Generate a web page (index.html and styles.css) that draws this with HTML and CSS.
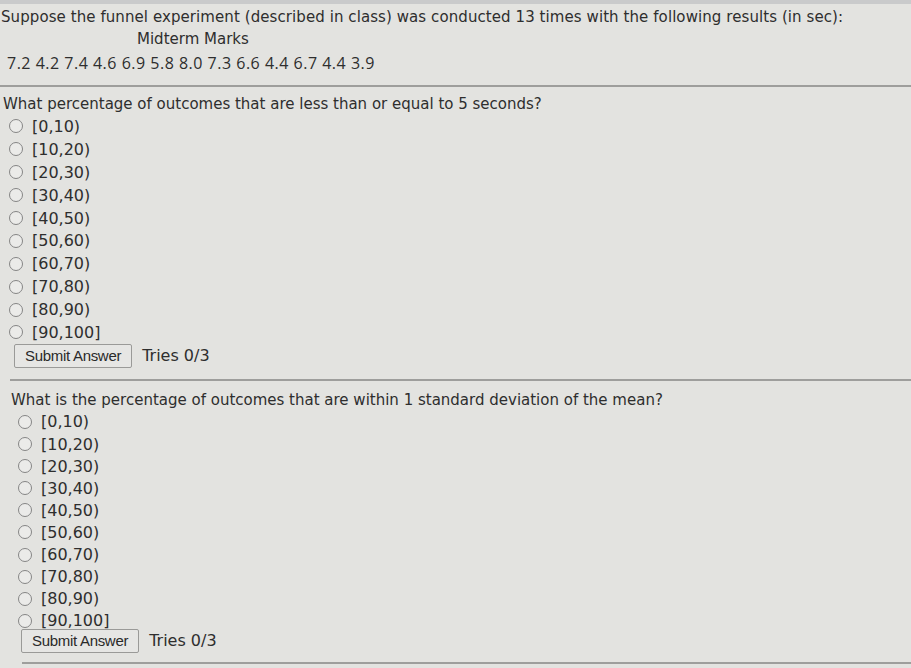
FILE: index.html
```html
<!DOCTYPE html>
<html>
<head>
<meta charset="utf-8">
<link rel="stylesheet" href="styles.css">
</head>
<body>
<div class="topbar"></div>
<div class="intro">
  <p class="lead">Suppose the funnel experiment (described in class) was conducted 13 times with the following results (in sec):</p>
  <div class="table-title">Midterm Marks</div>
  <div class="data">7.2 4.2 7.4 4.6 6.9 5.8 8.0 7.3 6.6 4.4 6.7 4.4 3.9</div>
</div>
<hr class="rule">
<section class="q q1">
  <p class="question">What percentage of outcomes that are less than or equal to 5 seconds?</p>
  <ul class="options">
    <li><span class="radio"></span>[0,10)</li>
    <li><span class="radio"></span>[10,20)</li>
    <li><span class="radio"></span>[20,30)</li>
    <li><span class="radio"></span>[30,40)</li>
    <li><span class="radio"></span>[40,50)</li>
    <li><span class="radio"></span>[50,60)</li>
    <li><span class="radio"></span>[60,70)</li>
    <li><span class="radio"></span>[70,80)</li>
    <li><span class="radio"></span>[80,90)</li>
    <li><span class="radio"></span>[90,100]</li>
  </ul>
  <div class="submit-row"><button class="submit">Submit Answer</button><span class="tries">Tries 0/3</span></div>
</section>
<hr class="rule rule2">
<section class="q q2">
  <p class="question">What is the percentage of outcomes that are within 1 standard deviation of the mean?</p>
  <ul class="options">
    <li><span class="radio"></span>[0,10)</li>
    <li><span class="radio"></span>[10,20)</li>
    <li><span class="radio"></span>[20,30)</li>
    <li><span class="radio"></span>[30,40)</li>
    <li><span class="radio"></span>[40,50)</li>
    <li><span class="radio"></span>[50,60)</li>
    <li><span class="radio"></span>[60,70)</li>
    <li><span class="radio"></span>[70,80)</li>
    <li><span class="radio"></span>[80,90)</li>
    <li><span class="radio"></span>[90,100]</li>
  </ul>
  <div class="submit-row"><button class="submit">Submit Answer</button><span class="tries">Tries 0/3</span></div>
</section>
<hr class="rule rule3">
</body>
</html>
```
FILE: styles.css
```css
html, body {
  margin: 0;
  padding: 0;
}
body {
  background: #e3e3e0;
  color: #2e2e2e;
  font-family: "DejaVu Sans", Verdana, sans-serif;
  font-size: 15px;
  overflow: hidden;
  height: 668px;
}
.topbar {
  height: 4px;
  background: #c9cacb;
}
.intro {
  padding: 0 0 0 1px;
}
.lead {
  margin: 3px 0 0 0;
  line-height: 20px;
  letter-spacing: 0.08px;
}
.table-title {
  margin-left: 136px;
  line-height: 20px;
  margin-top: 2px;
}
.data {
  font-family: "Open Sans", sans-serif;
  font-size: 16px;
  letter-spacing: 0.5px;
  line-height: 20px;
  margin: 4px 0 0 6px;
}
.rule {
  border: 0;
  height: 2px;
  background: #9e9e9c;
  margin: 12px 0 0 0;
}
.q1 {
  padding-left: 3px;
}
.question {
  margin: 7px 0 1px 0;
  line-height: 20px;
}
.options {
  list-style: none;
  margin: 0;
  padding: 0 0 0 6px;
}
.options li {
  display: flex;
  align-items: center;
  height: 22.9px;
  font-size: 16px;
}
.radio {
  width: 12px;
  height: 12px;
  border: 1px solid #858585;
  border-radius: 50%;
  background: #ebebe9;
  margin-right: 9px;
  flex: none;
}
.submit-row {
  display: flex;
  align-items: center;
  margin-top: 0;
  padding-left: 11px;
}
.submit {
  font-family: "Liberation Sans", Arial, sans-serif;
  font-size: 15px;
  color: #2a2a2a;
  background: #e6e6e4;
  border: 1px solid #9a9a98;
  border-radius: 2px;
  height: 24px;
  padding: 0 10px;
  margin-right: 10px;
  letter-spacing: -0.3px;
}
.tries {
  font-size: 16px;
}
.rule2 {
  margin: 11px 0 0 10px;
}
.q2 {
  padding-left: 11px;
}
.q2 .question {
  margin-top: 9px;
  margin-bottom: 1px;
}
.q2 .options {
  padding-left: 7px;
}
.q2 .options li {
  height: 22.1px;
}
.q2 .submit-row {
  padding-left: 10px;
  margin-top: -3px;
}
.rule3 {
  margin: 9px 0 0 22px;
}
```
